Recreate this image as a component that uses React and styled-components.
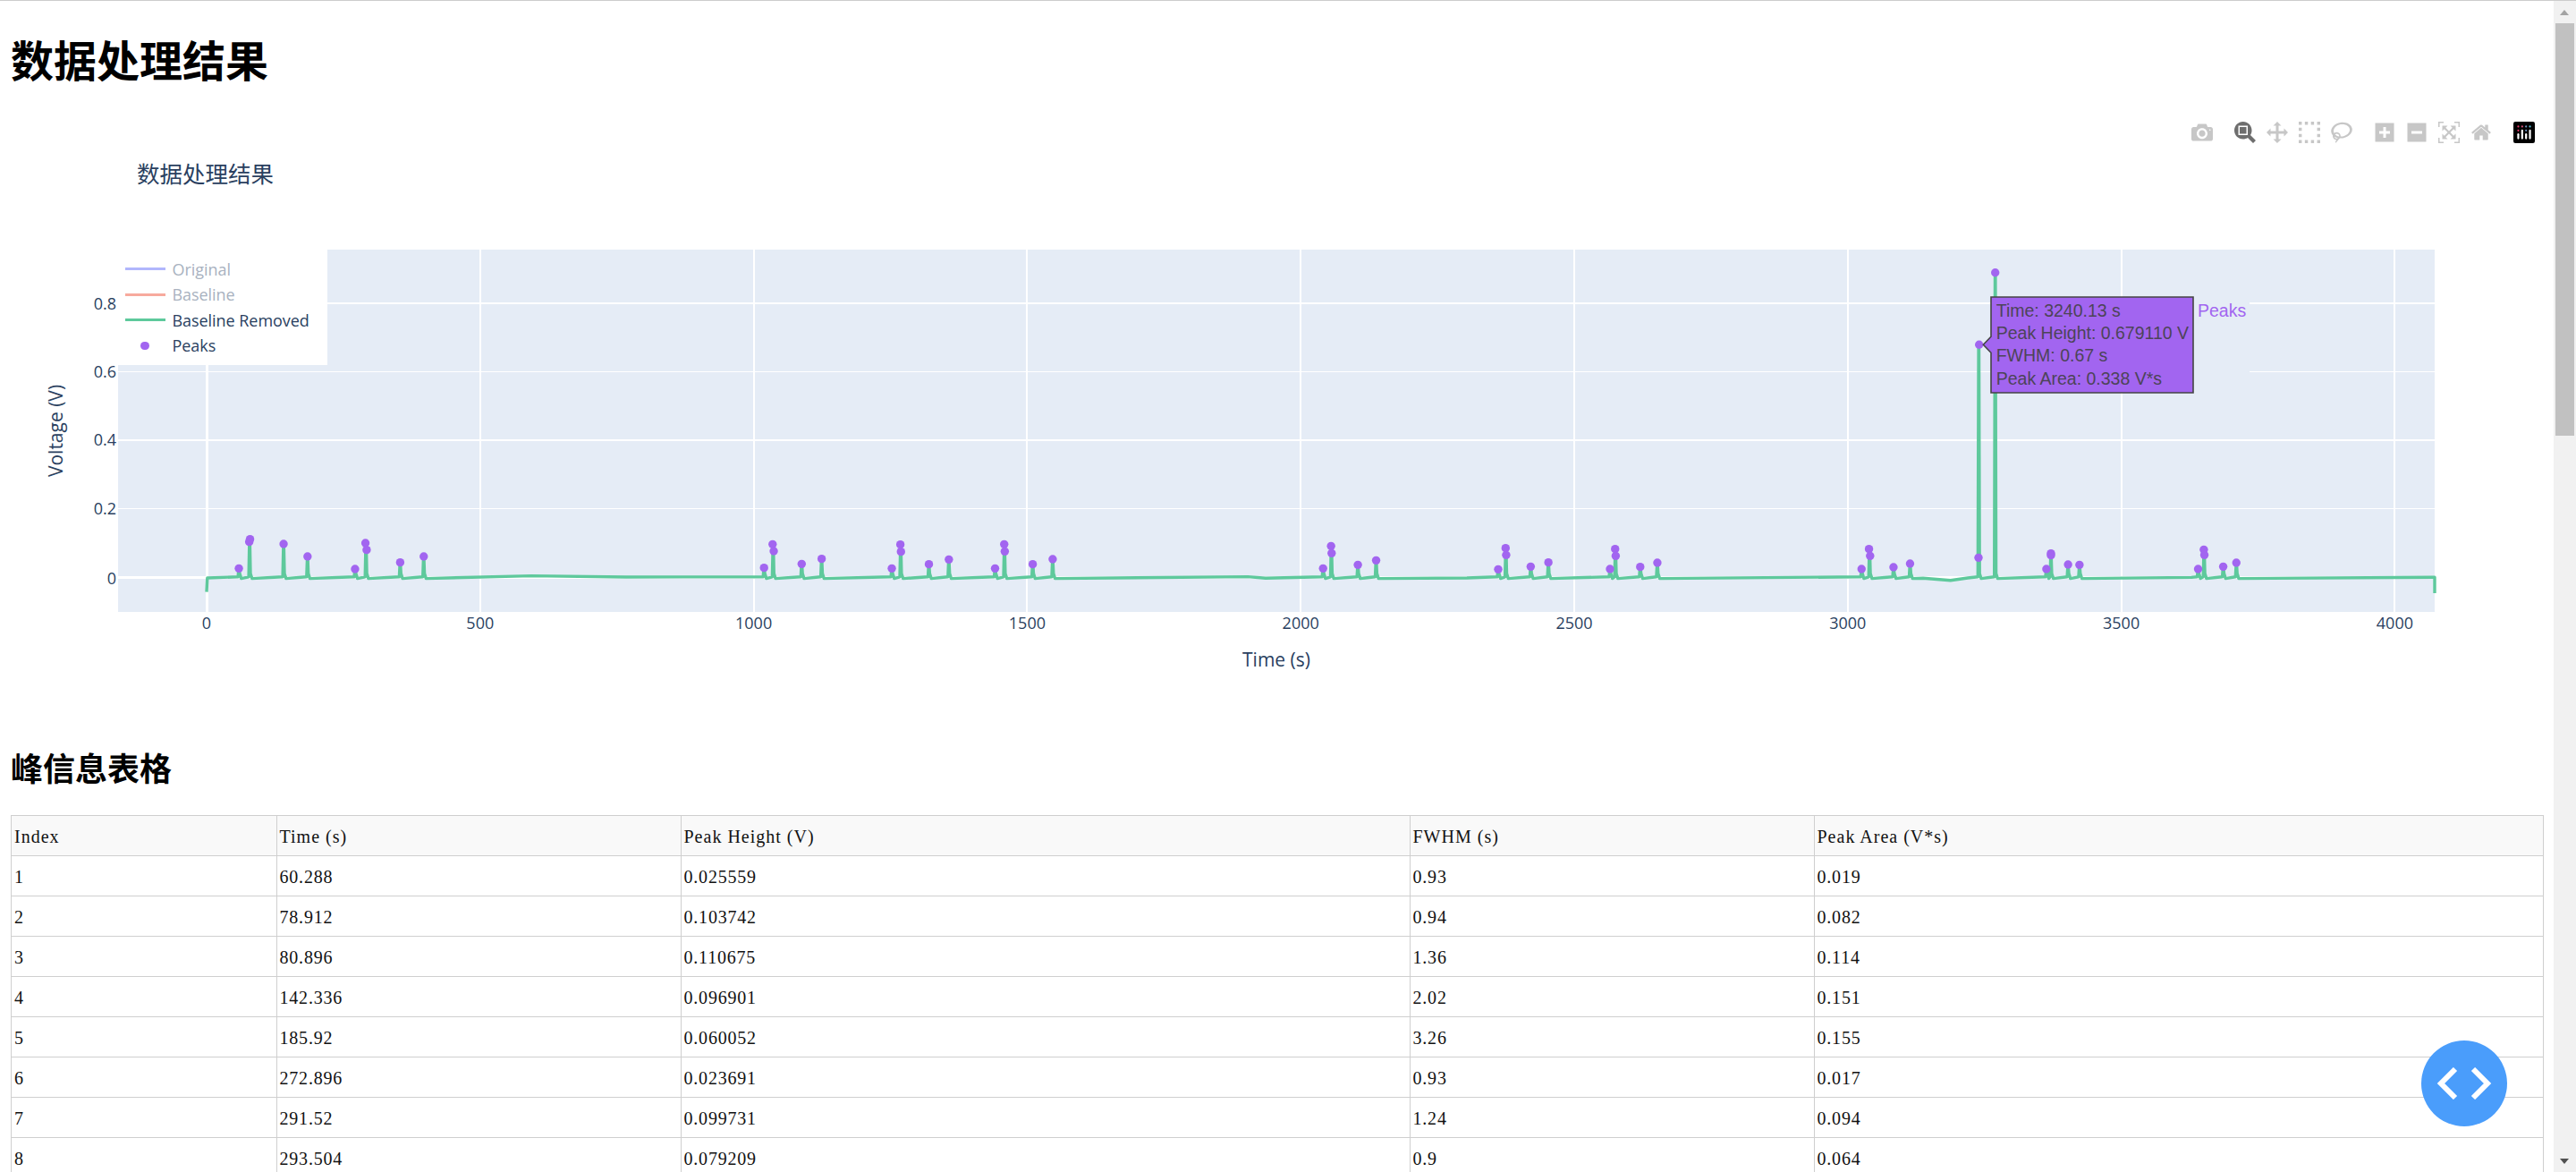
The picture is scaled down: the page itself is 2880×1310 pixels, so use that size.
import React from "react";
import styled, { createGlobalStyle } from "styled-components";

const Global = createGlobalStyle`
  html, body { margin: 0; padding: 0; background: #fff; overflow: hidden; }
  #root { height: 100vh; }
`;

const Page = styled.div`
  display: flex;
  height: 100vh;
  overflow: hidden;
  border-top: 1px solid #cccccc;
  box-sizing: border-box;
`;
const Main = styled.main`
  flex: 1;
  min-width: 0;
  padding: 0 12px;
  overflow: hidden;
`;
const Heading = styled.h1`
  margin: 32px 0 32px;
  font: 700 48px/64px "Noto Sans CJK SC", "Noto Sans", sans-serif;
  color: #000;
`;
const SubHeading = styled.h2`
  margin: 29px 0 30px;
  font: 700 36px/48px "Noto Sans CJK SC", "Noto Sans", sans-serif;
  color: #000;
`;

/* Plot */
const PlotFrame = styled.section`
  position: relative;
  height: 675px;
`;
const PlotSvg = styled.svg`
  display: block;
  width: 2831px;
  height: 675px;
`;
const Tick = styled.text`
  font: 400 18px "Open Sans", sans-serif;
  fill: #2a3f5f;
`;
const AxisTitle = styled.text`
  font: 400 21px "Open Sans", sans-serif;
  fill: #2a3f5f;
`;
const PlotTitle = styled.text`
  font: 400 25.5px "Open Sans", "Noto Sans CJK SC", sans-serif;
  fill: #2a3f5f;
`;
const HoverText = styled.text`
  font: 400 19.5px "Liberation Sans", Arial, sans-serif;
  fill: ${(p) => p.$color};
`;

const Legend = styled.div`
  position: absolute;
  left: 120px;
  top: 150px;
  width: 234px;
  height: 129px;
  padding-top: 7.5px;
  box-sizing: border-box;
  background: #fff;
  display: flex;
  flex-direction: column;
`;
const LegendRow = styled.div`
  display: flex;
  align-items: center;
  height: 28.5px;
  padding-left: 7.5px;
  gap: 8px;
  font: 400 18px "Open Sans", sans-serif;
  letter-spacing: -0.05px;
  color: ${(p) => (p.$dim ? "#a9b2bf" : "#2a3f5f")};
`;
const Swatch = styled.span`
  width: 45px;
  display: flex;
  align-items: center;
  justify-content: center;
  &::before {
    content: "";
    display: block;
    width: ${(p) => (p.$dot ? "9.5px" : "45px")};
    height: ${(p) => (p.$dot ? "9.5px" : "3px")};
    border-radius: ${(p) => (p.$dot ? "50%" : "0")};
    background: ${(p) => p.$color};
  }
`;

const ModeBar = styled.div`
  position: absolute;
  top: 7px;
  right: 3px;
  display: flex;
  gap: 12px;
`;
const ModeGroup = styled.div`
  display: flex;
`;
const ModeButton = styled.span`
  display: block;
  width: 24px;
  height: 24px;
  padding: 0 6px;
  svg {
    display: block;
    width: 24px;
    height: 24px;
    fill: ${(p) => (p.$active ? "#6e6e6e" : "#c7c7c7")};
  }
`;

/* Table */
const Table = styled.table`
  width: 2831px;
  table-layout: fixed;
  border-collapse: collapse;
  font-family: "Liberation Serif", "Noto Sans CJK SC", serif;
  font-size: 20px;
  color: #111;
`;
const HeadCell = styled.th`
  height: 45px;
  padding: 2px 3px 0;
  box-sizing: border-box;
  border: 1px solid #cfcfcf;
  background: #f9f9f9;
  font-weight: 400;
  text-align: left;
  letter-spacing: 1px;
`;
const Cell = styled.td`
  height: 45px;
  padding: 3px 3px 0;
  box-sizing: border-box;
  border: 1px solid #cfcfcf;
  letter-spacing: 0.8px;
`;

/* Chrome */
const Scrollbar = styled.aside`
  position: relative;
  flex: 0 0 25px;
  background: #f1f1f1;
`;
const ScrollThumb = styled.div`
  margin: 25px 2px 0;
  height: 461px;
  background: #c1c1c1;
`;
const ScrollArrow = styled.span`
  position: absolute;
  left: 7px;
  width: 0;
  height: 0;
  border-left: 5.5px solid transparent;
  border-right: 5.5px solid transparent;
  ${(p) =>
    p.$up
      ? "top: 10px; border-bottom: 6px solid #a3a3a3;"
      : "bottom: 9px; border-top: 6px solid #505050;"}
`;
const Fab = styled.button`
  position: fixed;
  right: 77px;
  bottom: 51px;
  width: 96px;
  height: 96px;
  padding: 0;
  border: 0;
  border-radius: 50%;
  background: #4a9dfb;
  display: flex;
  align-items: center;
  justify-content: center;
`;

/* Data */
const ICONS = {
  camera: [1000, 850, "m500 450c-83 0-150-67-150-150 0-83 67-150 150-150 83 0 150 67 150 150 0 83-67 150-150 150z m400 150h-120c-16 0-34 13-39 29l-31 93c-6 15-23 28-40 28h-340c-16 0-34-13-39-28l-31-94c-6-15-23-28-40-28h-120c-55 0-100-45-100-100v-450c0-55 45-100 100-100h800c55 0 100 45 100 100v450c0 55-45 100-100 100z m-400-550c-138 0-250 112-250 250 0 138 112 250 250 250 138 0 250-112 250-250 0-138-112-250-250-250z m365 380c-19 0-35 16-35 35 0 19 16 35 35 35 19 0 35-16 35-35 0-19-16-35-35-35z"],
  zoom: [1000, 850, "m1000-25l-250 251c40 63 63 138 63 218 0 224-182 406-407 406-224 0-406-182-406-406s183-406 407-406c80 0 155 22 218 62l250-250 125 125z m-812 250l0 438 437 0 0-438-437 0z m62 375l313 0 0-312-313 0 0 312z"],
  pan: [1000, 850, "m1000 350l-187 188 0-125-250 0 0 250 125 0-188 187-187-187 125 0 0-250-250 0 0 125-188-188 186-187 0 125 252 0 0-250-125 0 187-188 188 188-125 0 0 250 250 0 0-126 187 188z"],
  select: [1000, 993, "m0 850l0 143 143 0 0-143-143 0z m286 0l0 143 143 0 0-143-143 0z m285 0l0 143 143 0 0-143-143 0z m286 0l0 143 143 0 0-143-143 0z m-857-286l0 143 143 0 0-143-143 0z m857 0l0 143 143 0 0-143-143 0z m-857-285l0 143 143 0 0-143-143 0z m857 0l0 143 143 0 0-143-143 0z m-857-286l0 143 143 0 0-143-143 0z m286 0l0 143 143 0 0-143-143 0z m285 0l0 143 143 0 0-143-143 0z m286 0l0 143 143 0 0-143-143 0z"],
  lasso: [1031, 850, "m1018 538c-36 207-290 336-568 286-277-48-473-256-436-463 10-57 36-108 76-151-13-66 11-137 68-183 34-28 75-41 114-42l-55-70 0 0c-2-1-3-2-4-3-10-14-8-34 5-45 14-11 34-8 45 4 1 1 2 3 2 5l0 0 113 140c16 11 31 24 45 40 4 3 6 7 8 11 48-3 100 0 151 9 278 48 473 255 436 462z m-624-379c-80 14-149 48-197 96 42 42 109 47 156 9 33-26 47-66 41-105z m-187-74c-19 16-33 37-39 60 50-32 109-55 174-68-42-25-95-24-135 8z m360 75c-34-7-69-9-102-8 8 62-16 128-68 170-73 59-175 54-244-5-9 20-16 40-20 61-28 159 121 317 333 354s407-60 434-217c28-159-121-318-333-355z"],
  plus: [875, 850, "m1 787l0-875 875 0 0 875-875 0z m687-500l-187 0 0-187-125 0 0 187-188 0 0 125 188 0 0 187 125 0 0-187 187 0 0-125z"],
  minus: [875, 850, "m0 788l0-876 875 0 0 876-875 0z m688-500l-500 0 0 125 500 0 0-125z"],
  autoscale: [1000, 850, "m250 850l-187 0-63 0 0-62 0-188 63 0 0 188 187 0 0 62z m688 0l-188 0 0-62 188 0 0-188 62 0 0 188 0 62-62 0z m-875-938l0 188-63 0 0-188 0-62 63 0 187 0 0 62-187 0z m875 188l0-188-188 0 0-62 188 0 62 0 0 62 0 188-62 0z m-125 188l-1 0-93-94-156 156 156 156 92-93 2 0 0 250-250 0 0-2 93-92-156-156-156 156 94 92 0 2-250 0 0-250 0 0 93 93 157-156-157-156-93 94 0 0 0-250 250 0 0 0-94 93 156 157 156-157-93-93 0 0 250 0 0 250z"],
  home: [928.6, 850, "m786 296v-267q0-15-11-26t-25-10h-214v214h-143v-214h-214q-15 0-25 10t-11 26v267q0 1 0 2t0 2l321 264 321-264q1-1 1-4z m124 39l-34-41q-5-5-12-6h-2q-7 0-12 3l-386 322-386-322q-7-4-13-4-7 2-12 7l-35 41q-4 5-3 13t6 12l401 334q18 15 42 15t43-15l136-114v109q0 8 5 13t13 5h107q8 0 13-5t5-13v-227l122-102q5-5 6-12t-4-13z"],
};

const PlotIcon = ({ name }) => {
  const [w, ascent, d] = ICONS[name];
  return (
    <svg viewBox={`0 0 ${w} 1000`}>
      <path transform={`matrix(1 0 0 -1 0 ${ascent})`} d={d} />
    </svg>
  );
};

const PlotlyLogo = () => (
  <svg viewBox="0 0 132 132">
    <rect width="132" height="132" rx="12" fill="#000" />
    <circle cx="30" cy="30" r="6" fill="#ef3a6e" />
    <circle cx="54" cy="30" r="6" fill="#d9537f" />
    <circle cx="78" cy="30" r="6" fill="#6f95c4" />
    <circle cx="102" cy="30" r="6" fill="#62c6dd" />
    <circle cx="30" cy="54" r="6" fill="#ef3a6e" />
    <circle cx="78" cy="54" r="6" fill="#6f95c4" />
    <path fill="#fff" d="M30,72a6,6,0,0,0-6,6v24a6,6,0,0,0,12,0V78A6,6,0,0,0,30,72Z" />
    <path fill="#fff" d="M78,72a6,6,0,0,0-6,6v24a6,6,0,0,0,12,0V78A6,6,0,0,0,78,72Z" />
    <path fill="#fff" d="M54,48a6,6,0,0,0-6,6v48a6,6,0,0,0,12,0V54A6,6,0,0,0,54,48Z" />
    <path fill="#fff" d="M102,48a6,6,0,0,0-6,6v48a6,6,0,0,0,12,0V54A6,6,0,0,0,102,48Z" />
  </svg>
);

const fromZ6 = ([X, Y]) => [130 + X / 2.24, 560 + Y / 3];
const fromZ8 = ([X, Y]) => [800 + X / 1.568, 560 + Y / 3];
const fromZ7 = ([X, Y]) => [1800 + X / 1.568, 560 + Y / 3];

const PEAKS = [
  ...[[307,226],[333,137],[335,128],[419,144],[479,186],[598,228],[624,141],[627,164],[711,206],[770,186]].map(fromZ6),
  ...[[85,224],[100,145],[102,168],[151,211],[186,194],[309,226],[324,146],[325,170],[374,212],[409,196],[490,226],[506,145],[507,169],[556,212],[591,195],[1065,226],[1079,151],[1080,175],[1126,214],[1158,199],[1372,229],[1385,158],[1386,181],[1429,220],[1460,206]].map(fromZ8),
  ...[[0,228],[9,161],[10,184],[53,221],[83,207],[441,228],[454,161],[456,184],[497,222],[526,210],[646,190],[765,228],[773,176],[773,182],[803,213],[823,214],[1031,228],[1041,163],[1042,181],[1075,220],[1098,207]].map(fromZ7),
  [2212.7, 385.3],
  [2230.7, 304.7],
].sort((a, b) => a[0] - b[0]);

const buildLine = () => {
  const clusters = [];
  PEAKS.forEach(([x, y]) => {
    const last = clusters[clusters.length - 1];
    if (last && x - last.x < 3) {
      last.top = Math.min(last.top, y);
      last.x = (last.x + x) / 2;
    } else {
      clusters.push({ x, top: y });
    }
  });
  const pts = [
    [231, 661.7], [231.8, 646], [594, 643.6], [700, 645], [1395, 644.6], [1415, 646.3],
    [1640, 646], [2150, 646.2], [2180.7, 648.7], [2200, 646], [2450, 645.4], [2720, 645.3],
    [2722, 645.3], [2722, 663],
  ];
  clusters.forEach(({ x, top }) => {
    pts.push([x - 1, 644.8], [x - 0.2, top], [x + 0.2, top], [x + 0.9, 641], [x + 2.6, 646.6]);
  });
  pts.sort((a, b) => a[0] - b[0]);
  return "M" + pts.map(([x, y]) => `${x.toFixed(1)} ${y.toFixed(1)}`).join("L");
};
const LINE = buildLine();

const X_TICKS = [0, 500, 1000, 1500, 2000, 2500, 3000, 3500, 4000];
const Y_TICKS = [
  { label: "0", y: 645, width: 3, text: 652.5 },
  { label: "0.2", y: 568.5, width: 1, text: 574.8 },
  { label: "0.4", y: 491.5, width: 2, text: 498.2 },
  { label: "0.6", y: 415.5, width: 1, text: 421.5 },
  { label: "0.8", y: 339, width: 2, text: 345.5 },
];
const xOf = (t) => 231 + t * 0.6116;

const ROWS = [
  [1, "60.288", "0.025559", "0.93", "0.019"],
  [2, "78.912", "0.103742", "0.94", "0.082"],
  [3, "80.896", "0.110675", "1.36", "0.114"],
  [4, "142.336", "0.096901", "2.02", "0.151"],
  [5, "185.92", "0.060052", "3.26", "0.155"],
  [6, "272.896", "0.023691", "0.93", "0.017"],
  [7, "291.52", "0.099731", "1.24", "0.094"],
  [8, "293.504", "0.079209", "0.9", "0.064"],
];
const COLUMNS = ["Index", "Time (s)", "Peak Height (V)", "FWHM (s)", "Peak Area (V*s)"];
const WIDTHS = [296.5, 452, 815, 452, 815.5];

const PURPLE = "#a265f0";
const GREEN = "#5ec99c";
const HOVER = "#4d4458";

const Chart = () => (
  <PlotSvg viewBox="12 129 2831 675">
    <PlotTitle x="153" y="204">数据处理结果</PlotTitle>
    <rect x="132" y="279" width="2590" height="405" fill="#e5ecf6" />
    {X_TICKS.map((t) => (
      <line key={t} x1={xOf(t)} x2={xOf(t)} y1="279" y2="684" stroke="#fff" strokeWidth={t === 0 ? 3 : 2} shapeRendering="crispEdges" />
    ))}
    {Y_TICKS.map((g) => (
      <line key={g.label} x1="132" x2="2722" y1={g.y} y2={g.y} stroke="#fff" strokeWidth={g.width} shapeRendering="crispEdges" />
    ))}
    {X_TICKS.map((t) => (
      <Tick key={t} x={xOf(t)} y="703" textAnchor="middle">{t}</Tick>
    ))}
    {Y_TICKS.map((g) => (
      <Tick key={g.label} x="130" y={g.text} textAnchor="end">{g.label}</Tick>
    ))}
    <AxisTitle x="1427" y="745" textAnchor="middle">Time (s)</AxisTitle>
    <AxisTitle transform="translate(70 481.5) rotate(-90)" textAnchor="middle">Voltage (V)</AxisTitle>
    <path d={LINE} fill="none" stroke={GREEN} strokeWidth="3.4" strokeLinejoin="round" />
    {PEAKS.map(([x, y], i) => (
      <circle key={i} cx={x} cy={y} r="4.7" fill={PURPLE} />
    ))}
    <rect x="2452" y="337" width="63" height="80" fill="#e5ecf6" />
    <path d="M2217.3 385.3L2226 376.3V332H2452V439H2226V394.3Z" fill={PURPLE} stroke="#444" strokeWidth="1.6" />
    <HoverText x="2231.7" y="353.5" $color={HOVER}>Time: 3240.13 s</HoverText>
    <HoverText x="2231.7" y="379" $color={HOVER}>Peak Height: 0.679110 V</HoverText>
    <HoverText x="2231.7" y="404.3" $color={HOVER}>FWHM: 0.67 s</HoverText>
    <HoverText x="2231.7" y="429.6" $color={HOVER}>Peak Area: 0.338 V*s</HoverText>
    <HoverText x="2457" y="353.5" $color={PURPLE}>Peaks</HoverText>
  </PlotSvg>
);

export default function App() {
  return (
    <Page>
      <Global />
      <Main>
        <Heading>数据处理结果</Heading>
        <PlotFrame>
          <Chart />
          <Legend>
            <LegendRow $dim><Swatch $color="#b1b6fc" />Original</LegendRow>
            <LegendRow $dim><Swatch $color="#f7aa9d" />Baseline</LegendRow>
            <LegendRow><Swatch $color={GREEN} />Baseline Removed</LegendRow>
            <LegendRow><Swatch $dot $color={PURPLE} />Peaks</LegendRow>
          </Legend>
          <ModeBar>
            <ModeGroup>
              <ModeButton><PlotIcon name="camera" /></ModeButton>
            </ModeGroup>
            <ModeGroup>
              <ModeButton $active><PlotIcon name="zoom" /></ModeButton>
              <ModeButton><PlotIcon name="pan" /></ModeButton>
              <ModeButton><PlotIcon name="select" /></ModeButton>
              <ModeButton><PlotIcon name="lasso" /></ModeButton>
            </ModeGroup>
            <ModeGroup>
              <ModeButton><PlotIcon name="plus" /></ModeButton>
              <ModeButton><PlotIcon name="minus" /></ModeButton>
              <ModeButton><PlotIcon name="autoscale" /></ModeButton>
              <ModeButton><PlotIcon name="home" /></ModeButton>
            </ModeGroup>
            <ModeGroup>
              <ModeButton><PlotlyLogo /></ModeButton>
            </ModeGroup>
          </ModeBar>
        </PlotFrame>
        <SubHeading>峰信息表格</SubHeading>
        <Table>
          <colgroup>
            {WIDTHS.map((w, i) => (
              <col key={i} width={w} />
            ))}
          </colgroup>
          <thead>
            <tr>
              {COLUMNS.map((c) => (
                <HeadCell key={c}>{c}</HeadCell>
              ))}
            </tr>
          </thead>
          <tbody>
            {ROWS.map((r) => (
              <tr key={r[0]}>
                {r.map((v, i) => (
                  <Cell key={i}>{v}</Cell>
                ))}
              </tr>
            ))}
          </tbody>
        </Table>
      </Main>
      <Scrollbar>
        <ScrollArrow $up />
        <ScrollThumb />
        <ScrollArrow />
      </Scrollbar>
      <Fab aria-label="code">
        <svg width="64" height="36" viewBox="0 0 64 36" fill="none" stroke="#fff" strokeWidth="6">
          <path d="M22 2L6 18L22 34" />
          <path d="M42 2L58 18L42 34" />
        </svg>
      </Fab>
    </Page>
  );
}
